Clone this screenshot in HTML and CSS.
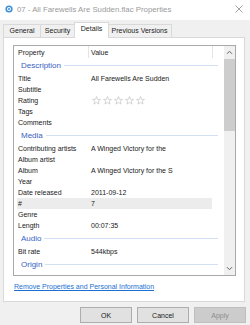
FILE: index.html
```html
<!DOCTYPE html>
<html lang="en">
<head>
    <meta charset="UTF-8">
    <title>07 - All Farewells Are Sudden.flac Properties</title>
    <link rel="stylesheet" href="styles.css">
</head>
<body>

<div class="window">
    <div class="titlebar">
        <svg class="app-icon" width="8" height="8" viewBox="0 0 8 8">
            <circle cx="4" cy="4" r="3.6" fill="#3b8ed8"/>
            <circle cx="4" cy="4" r="2" fill="#ffffff"/>
            <circle cx="4" cy="4" r="1" fill="#3b8ed8"/>
        </svg>
        <span class="title">07 - All Farewells Are Sudden.flac Properties</span>
        <svg class="close" width="8" height="8" viewBox="0 0 8 8">
            <path d="M0.5 0.5 L7.5 7.5 M7.5 0.5 L0.5 7.5" stroke="#8a8a8a" stroke-width="0.8"/>
        </svg>
    </div>

    <div class="tabs">
        <div class="tab tab-general">General</div>
        <div class="tab tab-security">Security</div>
        <div class="tab tab-details active">Details</div>
        <div class="tab tab-versions">Previous Versions</div>
    </div>

    <div class="panel">
        <div class="listbox">
            <div class="list">
                <div class="list-head">
                    <span class="col-prop">Property</span>
                    <span class="col-value">Value</span>
                    <span class="col-rest"></span>
                </div>

                <div class="group"><span>Description</span></div>
                <div class="row"><span>Title</span><span>All Farewells Are Sudden</span></div>
                <div class="row"><span>Subtitle</span><span></span></div>
                <div class="row">
                    <span>Rating</span>
                    <span class="stars">
                        <svg viewBox="0 0 10 10"><path d="M5 0.6 L6.2 3.7 L9.4 3.8 L6.9 5.8 L7.8 9 L5 7.2 L2.2 9 L3.1 5.8 L0.6 3.8 L3.8 3.7 Z"/></svg>
                        <svg viewBox="0 0 10 10"><path d="M5 0.6 L6.2 3.7 L9.4 3.8 L6.9 5.8 L7.8 9 L5 7.2 L2.2 9 L3.1 5.8 L0.6 3.8 L3.8 3.7 Z"/></svg>
                        <svg viewBox="0 0 10 10"><path d="M5 0.6 L6.2 3.7 L9.4 3.8 L6.9 5.8 L7.8 9 L5 7.2 L2.2 9 L3.1 5.8 L0.6 3.8 L3.8 3.7 Z"/></svg>
                        <svg viewBox="0 0 10 10"><path d="M5 0.6 L6.2 3.7 L9.4 3.8 L6.9 5.8 L7.8 9 L5 7.2 L2.2 9 L3.1 5.8 L0.6 3.8 L3.8 3.7 Z"/></svg>
                        <svg viewBox="0 0 10 10"><path d="M5 0.6 L6.2 3.7 L9.4 3.8 L6.9 5.8 L7.8 9 L5 7.2 L2.2 9 L3.1 5.8 L0.6 3.8 L3.8 3.7 Z"/></svg>
                    </span>
                </div>
                <div class="row"><span>Tags</span><span></span></div>
                <div class="row"><span>Comments</span><span></span></div>

                <div class="group"><span>Media</span></div>
                <div class="row"><span>Contributing artists</span><span>A Winged Victory for the</span></div>
                <div class="row"><span>Album artist</span><span></span></div>
                <div class="row"><span>Album</span><span>A Winged Victory for the S</span></div>
                <div class="row"><span>Year</span><span></span></div>
                <div class="row"><span>Date released</span><span>2011-09-12</span></div>
                <div class="row selected"><span>#</span><span>7</span></div>
                <div class="row"><span>Genre</span><span></span></div>
                <div class="row"><span>Length</span><span>00:07:35</span></div>

                <div class="group"><span>Audio</span></div>
                <div class="row"><span>Bit rate</span><span>544kbps</span></div>

                <div class="group"><span>Origin</span></div>
            </div>

            <div class="scrollbar">
                <div class="arrow">
                    <svg width="7" height="5" viewBox="0 0 7 5"><path d="M1 3.8 L3.5 1.3 L6 3.8" fill="none" stroke="#606060" stroke-width="1"/></svg>
                </div>
                <div class="thumb"></div>
                <div class="track"></div>
                <div class="arrow">
                    <svg width="7" height="5" viewBox="0 0 7 5"><path d="M1 1.2 L3.5 3.7 L6 1.2" fill="none" stroke="#606060" stroke-width="1"/></svg>
                </div>
            </div>
        </div>

        <a class="remove-link" href="#">Remove Properties and Personal Information</a>
    </div>

    <div class="buttons">
        <button type="button">OK</button>
        <button type="button">Cancel</button>
        <button type="button" class="disabled">Apply</button>
    </div>
</div>

</body>
</html>
```

FILE: styles.css
```css
body {
    margin: 0;
    font-family: "Liberation Sans", Arial, sans-serif;
    font-size: 7px;
    color: #1a1a1a;
}

.window {
    width: 250px;
    height: 325px;
    background-color: #f0f0f0;
    overflow: hidden;
}

.titlebar {
    height: 20px;
    background: #ffffff;
    display: flex;
    align-items: center;
    padding: 0 6px 0 5px;
}

.app-icon {
    flex: none;
    margin-top: -2px;
}

.title {
    margin-left: 4px;
    font-size: 7.8px;
    color: #9a9a9a;
    flex: 1;
    margin-top: -2px;
}

.close {
    flex: none;
    margin-top: -2px;
    margin-right: 1px;
}

.tabs {
    display: flex;
    align-items: flex-end;
    height: 17px;
    padding-left: 3px;
}

.tab {
    height: 12px;
    line-height: 12px;
    background: #f0f0f0;
    border: 1px solid #d9d9d9;
    border-bottom: none;
    text-align: center;
    margin-left: -1px;
}

.tab:first-child {
    margin-left: 0;
}

.tab-general { width: 36px; }
.tab-security { width: 33px; }
.tab-details { width: 33px; }
.tab-versions { width: 63px; }

.tab.active {
    height: 15px;
    line-height: 12px;
    background: #ffffff;
    position: relative;
    top: 1px;
    z-index: 1;
    margin-right: -1px;
}

.panel {
    height: 256px;
    margin: 0 5px 0 3px;
    background: #ffffff;
    border: 1px solid #d9d9d9;
    padding: 7px 8px 0 9px;
}

.listbox {
    height: 229px;
    border: 1px solid #a9a9a9;
    display: flex;
}

.list {
    flex: 1;
}

.list-head {
    display: flex;
    height: 12px;
    line-height: 13px;
}

.col-prop {
    width: 70px;
    padding-left: 4px;
    border-right: 1px solid #e5e5e5;
}

.col-value {
    width: 121px;
    padding-left: 2px;
    border-right: 1px solid #e5e5e5;
}

.group {
    height: 15px;
    margin: 0 6px 0 3px;
    padding-left: 4px;
    display: flex;
    align-items: center;
    font-size: 8px;
    color: #3a62c2;
}

.group::after {
    content: "";
    flex: 1;
    height: 1px;
    margin-left: 3px;
    margin-top: -1px;
    background: #d3dff2;
}

.group span {
    margin-top: -1px;
}

.row {
    display: grid;
    grid-template-columns: 73px 1fr;
    height: 11px;
    line-height: 11px;
    margin: 0 12px 0 3px;
    padding-left: 1px;
    white-space: nowrap;
    overflow: hidden;
}

.row.selected {
    background: #ececec;
}

.stars {
    display: flex;
    align-items: center;
    gap: 2px;
    padding-left: 1px;
}

.stars svg {
    width: 9px;
    height: 9px;
    fill: none;
    stroke: #c4c4c4;
    stroke-width: 0.8;
}

.scrollbar {
    width: 11px;
    display: flex;
    flex-direction: column;
    background: #f0f0f0;
}

.arrow {
    height: 13px;
    display: flex;
    align-items: center;
    justify-content: center;
}

.thumb {
    height: 72px;
    background: #cdcdcd;
}

.track {
    flex: 1;
}

.remove-link {
    display: block;
    margin-top: 7px;
    margin-left: 1px;
    color: #1a6fd1;
    line-height: 8px;
}

.buttons {
    display: flex;
    justify-content: flex-end;
    gap: 5px;
    padding: 5px 4px 0 0;
}

button {
    width: 52px;
    height: 16px;
    padding: 0;
    font-family: "Liberation Sans", Arial, sans-serif;
    font-size: 7px;
    color: #1a1a1a;
    background-color: #e1e1e1;
    border: 1px solid #adadad;
    border-radius: 0;
}

button.disabled {
    color: #8c8c8c;
    background-color: #cccccc;
    border-color: #bfbfbf;
}
```
